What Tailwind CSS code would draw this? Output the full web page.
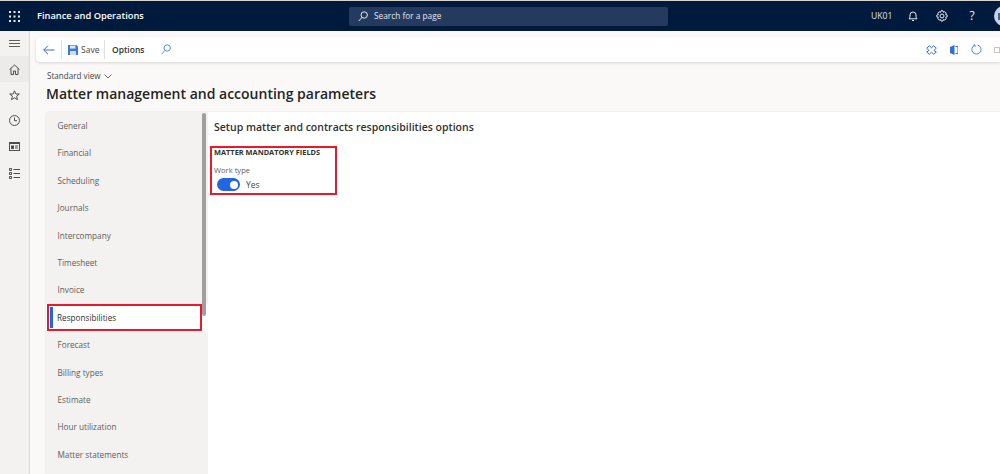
<!DOCTYPE html>
<html lang="en">
<head>
  <meta charset="UTF-8">
  <title>Matter management and accounting parameters</title>
  <script src="https://cdn.jsdelivr.net/npm/@tailwindcss/browser@4"></script>
</head>
<body class="h-[474px] w-[1000px] overflow-hidden bg-[#faf9f8] font-['Open_Sans',sans-serif] text-[#323130]">
  <div class="h-px bg-[#d8d4cc]"></div>
  <!-- top nav -->
  <header class="flex h-[30px] items-center overflow-hidden bg-[#001a3d] text-white">
    <div class="flex w-[29px] shrink-0 justify-center">
      <svg width="11" height="11" viewBox="0 0 11 11" fill="#e8edf4"><rect x="0" y="0" width="2" height="2"/><rect x="4.500" y="0" width="2" height="2"/><rect x="9" y="0" width="2" height="2"/><rect x="0" y="4.500" width="2" height="2"/><rect x="4.500" y="4.500" width="2" height="2"/><rect x="9" y="4.500" width="2" height="2"/><rect x="0" y="9" width="2" height="2"/><rect x="4.500" y="9" width="2" height="2"/><rect x="9" y="9" width="2" height="2"/></svg>
    </div>
    <span class="ml-[8px] w-[312px] shrink-0 text-[9.300px] font-semibold">Finance and Operations</span>
    <div class="flex h-[19px] w-[319px] shrink-0 items-center gap-[6px] rounded-[2px] bg-[#243a5e] pl-[9px] text-[8.300px] text-[#e3e8ef]">
      <svg width="10" height="11" viewBox="0 0 10 11" fill="none" stroke="#e3e8ef" stroke-width="1"><circle cx="6.200" cy="4" r="3.200"/><path d="M3.900 6.400.8 10"/></svg>
      <span class="pt-px">Search for a page</span>
    </div>
    <span class="ml-[203px] w-[32px] shrink-0 text-[8.600px] text-[#dfe4ea]">UK01</span>
    <div class="flex w-[20px] shrink-0 justify-center">
      <svg width="10" height="12" viewBox="0 0 10 12" fill="none" stroke="#e8edf4" stroke-width="1"><path d="M1 8.800c1-1 1-2 1-3.800a3 3 0 0 1 6 0c0 1.800 0 2.800 1 3.800z"/><path d="M4 10.500h2"/></svg>
    </div>
    <div class="ml-[9px] flex w-[20px] shrink-0 justify-center">
      <svg width="12" height="12" viewBox="0 0 12 12" fill="none" stroke="#e8edf4" stroke-width="1"><circle cx="6" cy="6" r="2"/><path d="M5 .8h2l.4 1.500 1.400-.6 1.400 1.400-.6 1.400 1.500.4v2l-1.500.4.6 1.400-1.400 1.400-1.400-.6-.4 1.500H5l-.4-1.500-1.400.6-1.400-1.400.6-1.400L.9 7V5l1.500-.4-.6-1.400 1.400-1.400 1.400.6z"/></svg>
    </div>
    <span class="ml-[10px] w-[20px] shrink-0 text-center text-[12px] text-[#e8edf4]">?</span>
    <div class="ml-[12px] flex size-[20px] shrink-0 items-center rounded-full bg-[#c5d3ea] pl-[4px]">
      <div class="h-[7px] w-[2px] shrink-0 bg-[#5a5f78]"></div>
    </div>
  </header>

  <div class="flex h-[443px]">
    <!-- left rail -->
    <nav class="flex w-[30px] shrink-0 flex-col items-center border-r border-[#dcdad8] bg-[#f3f2f1]">
      <div class="flex h-[25px] w-full items-center justify-center">
        <svg width="11" height="7" viewBox="0 0 11 7" stroke="#605e5c" stroke-width="1"><path d="M0 .5h11M0 3.500h11M0 6.500h11"/></svg>
      </div>
      <div class="flex h-[26px] w-full items-center justify-center bg-[#ecebe9]">
        <svg width="11" height="11" viewBox="0 0 11 11" fill="none" stroke="#4f4d4b" stroke-width="1"><path d="M.6 5.500 5.500 1l4.900 4.500M2 4.500v6h2.500V7h2v3.500H9v-6"/></svg>
      </div>
      <div class="flex h-[26px] w-full items-center justify-center">
        <svg width="11" height="11" viewBox="0 0 11 11" fill="none" stroke="#4f4d4b" stroke-width="1"><path d="M5.500 .8 6.900 4h3.400L7.600 6.200l.9 3.500-3-1.900-3 1.900.9-3.500L.7 4h3.400z"/></svg>
      </div>
      <div class="flex h-[25px] w-full items-center justify-center">
        <svg width="11" height="11" viewBox="0 0 11 11" fill="none" stroke="#4f4d4b" stroke-width="1"><circle cx="5.500" cy="5.500" r="5"/><path d="M5.500 2.500v3.200h2.500"/></svg>
      </div>
      <div class="flex h-[26px] w-full items-center justify-center">
        <svg width="11" height="9" viewBox="0 0 11 9" fill="#4f4d4b"><path d="M0 0h11v9H0zm1 2v6h9V2z"/><path d="M2 3.500h3v3.500H2zM6 3.500h3v1H6zM6 5.500h3v1H6z"/></svg>
      </div>
      <div class="flex h-[28px] w-full items-center justify-center">
        <svg width="11" height="11" viewBox="0 0 11 11" fill="none" stroke="#4f4d4b" stroke-width="1"><path d="M.5.500h2v2h-2zM.5 4.500h2v2h-2zM.5 8.500h2v2h-2zM4.500 1.500H11M4.500 5.500H11M4.500 9.500H11"/></svg>
      </div>
    </nav>

    <main class="min-w-0 flex-1">
      <!-- action bar -->
      <div class="ml-[6px] mt-[6px] flex h-[25px] items-center rounded-l-[4px] bg-white shadow-[0_1px_3px_rgba(0,0,0,0.15)]">
        <div class="flex w-[25px] justify-center">
          <svg width="12" height="10" viewBox="0 0 12 10" fill="none" stroke="#2f6fd6" stroke-width="1"><path d="M11.500 5H.8M5 .7.700 5 5 9.300"/></svg>
        </div>
        <div class="h-[19px] w-px bg-[#e1dfdd]"></div>
        <div class="flex w-[42px] items-center gap-[3px] pl-[6px] text-[8.500px] text-[#484644]">
          <svg class="shrink-0" width="10" height="10" viewBox="0 0 10 10"><path d="M0 0h8.500L10 1.500V10H0z" fill="#3f78d4"/><path d="M2 .6h5.500v3H2z" fill="#dbe6f6"/><path d="M2 6h6v4H2z" fill="#cfdcf2"/></svg>
          <span class="pt-[2px]">Save</span>
        </div>
        <div class="h-[19px] w-px bg-[#e1dfdd]"></div>
        <span class="ml-[7px] w-[49px] pt-[2px] text-[8.500px] font-semibold text-[#323130]">Options</span>
        <svg width="10" height="11" viewBox="0 0 10 11" fill="none" stroke="#5b8fe0" stroke-width="1"><circle cx="6.200" cy="4" r="3.200"/><path d="M3.900 6.400.8 10"/></svg>
        <div class="ml-auto flex items-center">
          <svg width="11" height="10" viewBox="0 0 11 10" fill="none" stroke="#2f6fd6" stroke-width="1"><path d="M5.500 2.800 3.300.7.700 3.200l2.400 2.300L.7 7l2.600 2.300 2.200-2.100 2.200 2.100L10.300 7 7.900 5.500l2.400-2.300L7.700.7z"/></svg>
          <svg class="ml-[13px]" width="8" height="10" viewBox="0 0 8 10"><path d="M0 2 4.500 0v10L0 8z" fill="#2f6fd6"/><path d="M5.500 1.500H8v7H5.500" fill="none" stroke="#2f6fd6"/></svg>
          <svg class="ml-[13px]" width="11" height="11" viewBox="0 0 11 11" fill="none" stroke="#4d8ae4" stroke-width="1"><path d="M3.500 1.300A4.600 4.600 0 1 0 6.500 1M3.200 0v2h2"/></svg>
          <div class="ml-[12px] h-[6px] w-[6px] border border-[#c8c6c4]"></div>
        </div>
      </div>

      <button class="ml-[17px] mt-[8px] flex h-[12px] items-center gap-[3px] text-[8.100px] text-[#484644]">
        Standard view
        <svg width="8" height="5" viewBox="0 0 8 5" fill="none" stroke="#484644" stroke-width=".8"><path d="M.5.500 4 4 7.500.5"/></svg>
      </button>
      <h1 class="ml-[16px] h-[23px] text-[14px] leading-[23px] font-semibold whitespace-nowrap text-[#252423]">Matter management and accounting parameters</h1>

      <!-- form panel -->
      <div class="ml-[16px] mt-[7px] flex h-[363px] overflow-hidden rounded-tl-[4px] shadow-[0_0_2px_rgba(0,0,0,0.12)]">
        <aside class="relative w-[162px] shrink-0 bg-[#f3f2f1] pt-[.5px] text-[8.200px] text-[#605e5c]">
          <div class="flex h-[27.400px] items-center pl-[11.500px]">General</div>
          <div class="flex h-[27.400px] items-center pl-[11.500px]">Financial</div>
          <div class="flex h-[27.400px] items-center pl-[11.500px]">Scheduling</div>
          <div class="flex h-[27.400px] items-center pl-[11.500px]">Journals</div>
          <div class="flex h-[27.400px] items-center pl-[11.500px]">Intercompany</div>
          <div class="flex h-[27.400px] items-center pl-[11.500px]">Timesheet</div>
          <div class="flex h-[27.400px] items-center pl-[11.500px]">Invoice</div>
          <div class="relative flex h-[27.400px] items-center bg-white pl-[11px] text-[#323130]">
            <div class="absolute left-[4px] top-[3px] h-[21px] w-[3px] bg-[#2266e3]"></div>
            <div class="absolute left-[1px] top-0 h-[27px] w-[155px] border-2 border-[#e8192c]"></div>
            Responsibilities
          </div>
          <div class="flex h-[27.400px] items-center pl-[11.500px]">Forecast</div>
          <div class="flex h-[27.400px] items-center pl-[11.500px]">Billing types</div>
          <div class="flex h-[27.400px] items-center pl-[11.500px]">Estimate</div>
          <div class="flex h-[27.400px] items-center pl-[11.500px]">Hour utilization</div>
          <div class="flex h-[27.400px] items-center pl-[11.500px]">Matter statements</div>
          <div class="absolute left-[156px] top-[1px] h-[203px] w-[4px] rounded-full bg-[#a19f9d]"></div>
        </aside>
        <section class="flex-1 bg-white pl-[2px] pt-[7px]">
          <h2 class="ml-[4px] h-[16px] text-[10.500px] leading-[16px] font-semibold whitespace-nowrap text-[#323130]">Setup matter and contracts responsibilities options</h2>
          <div class="mt-[11px] h-[49px] w-[127px] border-2 border-[#e8192c] pl-[2px]">
            <div class="h-[9px] text-[7.400px] leading-[9px] font-bold text-[#323130]">MATTER MANDATORY FIELDS</div>
            <div class="mt-[7px] h-[12px] text-[7.600px] leading-[12px] text-[#605e5c]">Work type</div>
            <div class="mt-[2px] flex items-center gap-[6px] pl-[3px]">
              <div class="flex h-[13px] w-[23px] items-center justify-end rounded-full bg-[#2266e3] pr-[2px]">
                <div class="size-[8px] rounded-full bg-white"></div>
              </div>
              <span class="pt-px text-[8.500px] text-[#484644]">Yes</span>
            </div>
          </div>
        </section>
      </div>
    </main>
  </div>
</body>
</html>
